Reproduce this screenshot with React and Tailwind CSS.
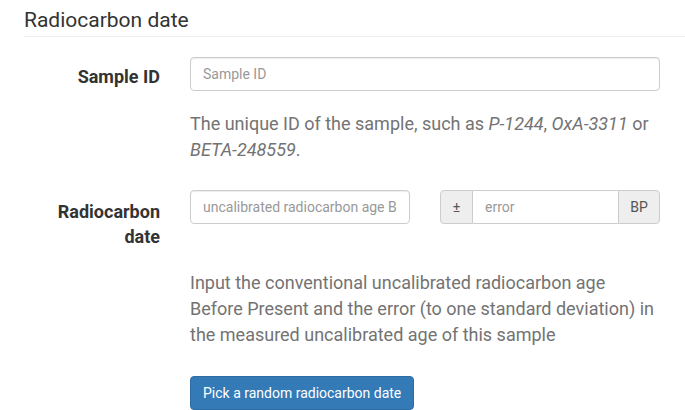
import React from "react";

const inputCls =
  "h-[34px] w-full rounded-[4px] border border-[#ccc] bg-white px-3 text-[14px] text-[#555] placeholder:text-[#999] outline-none shadow-[inset_0_1px_1px_rgba(0,0,0,0.075)]";

const App = () => {
  return (
    <div className="min-h-[410px] w-[685px] overflow-hidden bg-white font-['Roboto',sans-serif] text-[#333]">
      <h3 className="ml-6 border-b border-[#eee] pt-2 pb-1 text-[21px] leading-6 font-normal">
        Radiocarbon date
      </h3>

      <form className="mt-[20px]">
        <div className="flex items-start">
          <label
            htmlFor="sample-id"
            className="w-[175px] shrink-0 pr-[15px] pt-[7px] text-right text-[18px] leading-[26px] font-bold"
          >
            Sample ID
          </label>
          <div className="w-[485px] pl-[15px]">
            <input id="sample-id" type="text" placeholder="Sample ID" className={inputCls} />
          </div>
        </div>
        <p className="ml-[190px] mt-[20px] w-[470px] text-[18px] leading-[26px] text-[#737373]">
          The unique ID of the sample, such as <em>P-1244</em>, <em>OxA-3311</em> or{" "}
          <em>BETA-248559</em>.
        </p>

        <div className="mt-[27px] flex items-start">
          <label
            htmlFor="c14-age"
            className="w-[175px] shrink-0 pr-[15px] pt-[9px] text-right text-[18px] leading-[25px] font-bold"
          >
            Radiocarbon
            <br />
            date
          </label>
          <div className="flex w-[485px] gap-[30px] pl-[15px]">
            <div className="w-[220px]">
              <input
                id="c14-age"
                type="text"
                placeholder="uncalibrated radiocarbon age BP"
                className={inputCls}
              />
            </div>
            <div className="flex h-[34px] w-[220px] text-[14px] text-[#555]">
              <span className="flex w-[33px] items-center justify-center rounded-l-[4px] border border-[#ccc] bg-[#eee]">
                ±
              </span>
              <input
                type="text"
                placeholder="error"
                className="h-[34px] min-w-0 flex-1 border-y border-[#ccc] bg-white px-3 text-[14px] text-[#555] placeholder:text-[#999] outline-none"
              />
              <span className="flex w-[42px] items-center justify-center rounded-r-[4px] border border-[#ccc] bg-[#eee]">
                BP
              </span>
            </div>
          </div>
        </div>
        <p className="ml-[190px] mt-[21px] w-[470px] text-[18px] leading-[26px] text-[#737373]">
          Input the conventional uncalibrated radiocarbon age Before Present and the error (to one
          standard deviation) in the measured uncalibrated age of this sample
        </p>

        <div className="ml-[190px] mt-[28px]">
          <button
            type="button"
            className="h-[34px] rounded-[4px] border border-[#2e6da4] bg-[#337ab7] px-3 text-[14px] text-white"
          >
            Pick a random radiocarbon date
          </button>
        </div>
      </form>
    </div>
  );
};

export default App;
